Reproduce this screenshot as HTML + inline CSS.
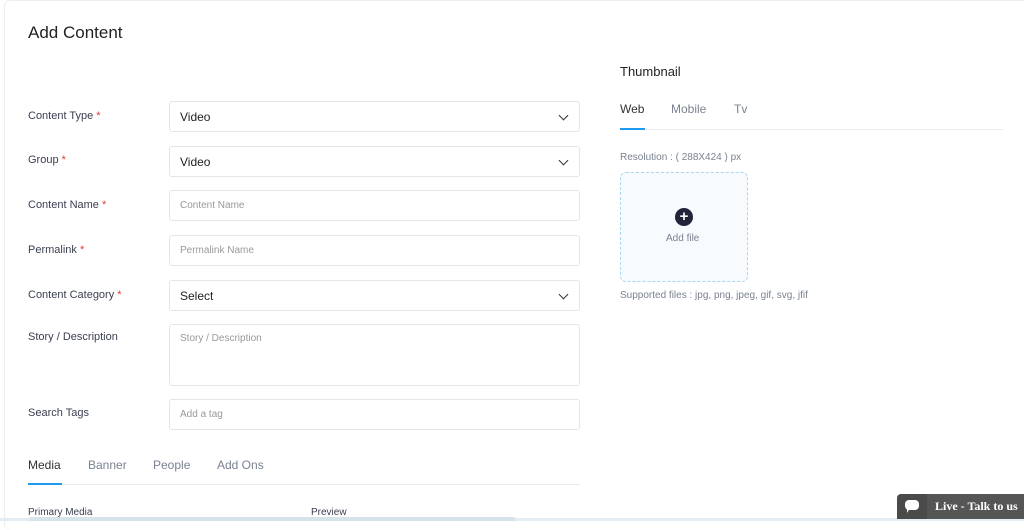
<!DOCTYPE html>
<html><head><style>
*{box-sizing:border-box;margin:0;padding:0}
body{width:1024px;height:521px;overflow:hidden;background:#fff;font-family:"Liberation Sans",sans-serif;position:relative;color:#333}
.card{position:absolute;left:4px;top:0;width:1030px;height:530px;border-left:1px solid #eee;border-top:1px solid #eee;border-radius:6px}
.a{position:absolute}
h1{position:absolute;left:28px;top:23px;font-size:17px;font-weight:normal;color:#222}
.lbl{position:absolute;left:28px;font-size:11px;color:#3a3f51}
.lbl i{color:#e53935;font-style:normal}
.in{position:absolute;left:169px;width:411px;height:31px;border:1px solid #e3e5ea;border-radius:3px;font-size:10px;color:#999;padding:0 10px;display:flex;align-items:center}
.in.v{font-size:12px;color:#222}
.chev{position:absolute;right:12px;top:10px;width:7px;height:7px;border-right:1.4px solid #333;border-bottom:1.4px solid #333;transform:rotate(45deg)}
.tab{position:absolute;font-size:12px;color:#7a8290}
</style></head><body>
<div class="card"></div>
<h1>Add Content</h1>

<div class="lbl" style="top:110px">Content Type <i>*</i></div>
<div class="in v" style="top:101px">Video<span class="chev"></span></div>
<div class="lbl" style="top:154px">Group <i>*</i></div>
<div class="in v" style="top:146px">Video<span class="chev"></span></div>
<div class="lbl" style="top:199px">Content Name <i>*</i></div>
<div class="in" style="top:190px">Content Name</div>
<div class="lbl" style="top:244px">Permalink <i>*</i></div>
<div class="in" style="top:235px">Permalink Name</div>
<div class="lbl" style="top:289px">Content Category <i>*</i></div>
<div class="in v" style="top:280px">Select<span class="chev"></span></div>
<div class="lbl" style="top:331px">Story / Description</div>
<div class="in" style="top:324px;height:62px;align-items:flex-start;padding-top:8px">Story / Description</div>
<div class="lbl" style="top:407px">Search Tags</div>
<div class="in" style="top:399px">Add a tag</div>

<div class="tab" style="left:28px;top:458px;color:#333">Media</div>
<div class="tab" style="left:88px;top:458px">Banner</div>
<div class="tab" style="left:153px;top:458px">People</div>
<div class="tab" style="left:217px;top:458px">Add Ons</div>
<div class="a" style="left:28px;top:484px;width:552px;height:1px;background:#e8eaee"></div>
<div class="a" style="left:28px;top:483px;width:34px;height:2px;background:#1e9bf0"></div>
<div class="lbl" style="top:507px;font-size:10px">Primary Media</div>
<div class="lbl" style="left:311px;top:507px;font-size:10px">Preview</div>
<div class="a" style="left:0;top:518px;width:1024px;height:3px;background:#e4eef2"></div>
<div class="a" style="left:30px;top:517px;width:485px;height:4px;background:#d6e4ea"></div>

<div class="a" style="left:620px;top:64px;font-size:13px;color:#222">Thumbnail</div>
<div class="tab" style="left:620px;top:102px;color:#333">Web</div>
<div class="tab" style="left:671px;top:102px">Mobile</div>
<div class="tab" style="left:734px;top:102px">Tv</div>
<div class="a" style="left:620px;top:129px;width:384px;height:1px;background:#eceef1"></div>
<div class="a" style="left:620px;top:128px;width:25px;height:2px;background:#1e9bf0"></div>
<div class="a" style="left:620px;top:152px;font-size:10px;color:#7a8290">Resolution : ( 288X424 ) px</div>
<div class="a" style="left:620px;top:172px;width:128px;height:110px;border:1px dashed #a9d6f5;border-radius:6px;background:#f8fbfe"></div>
<div class="a" style="left:675px;top:208px;width:18px;height:18px;border-radius:50%;background:#22243a;color:#fff;font-size:15px;line-height:18px;text-align:center;font-weight:bold">+</div>
<div class="a" style="left:666px;top:233px;font-size:10px;color:#7a8290">Add file</div>
<div class="a" style="left:620px;top:290px;font-size:10px;color:#7a8290">Supported files : jpg, png, jpeg, gif, svg, jfif</div>

<div class="a" style="left:897px;top:494px;width:130px;height:25px;background:#4a4a4a;border-radius:4px 0 0 0"></div>
<div class="a" style="left:927px;top:494px;width:100px;height:25px;background:#555"></div>
<div class="a" style="left:905px;top:500px;width:14px;height:10px;background:#fff;border-radius:4px"></div>
<div class="a" style="left:907px;top:508px;width:0;height:0;border-left:3px solid #fff;border-bottom:5px solid transparent"></div>
<div class="a" style="left:935px;top:499px;font-family:'Liberation Serif',serif;font-size:12px;font-weight:bold;color:#fff;white-space:nowrap">Live - Talk to us</div>
</body></html>
